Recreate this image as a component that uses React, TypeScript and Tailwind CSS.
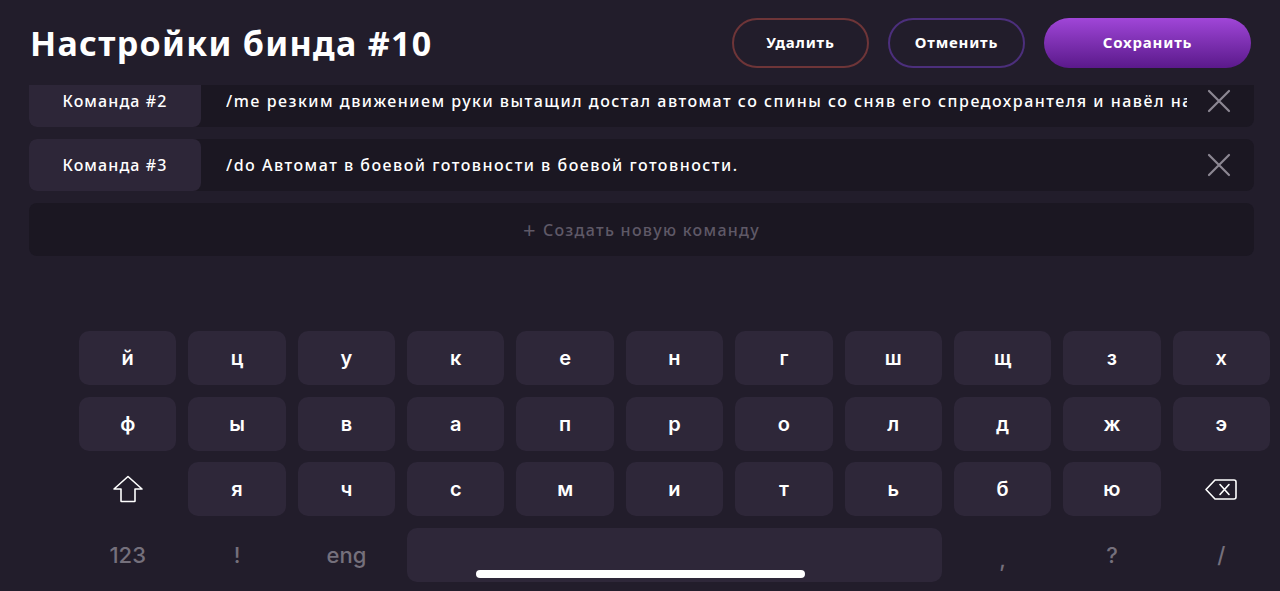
import React from "react";

const row1 = ["й", "ц", "у", "к", "е", "н", "г", "ш", "щ", "з", "х"];
const row2 = ["ф", "ы", "в", "а", "п", "р", "о", "л", "д", "ж", "э"];
const row3 = ["я", "ч", "с", "м", "и", "т", "ь", "б", "ю"];

function Key({ children }: { children: React.ReactNode }) {
  return (
    <div className="h-[54px] rounded-[10px] bg-[#2e2739] flex items-center justify-center text-white text-[20px] font-semibold">
      {children}
    </div>
  );
}

function Plain({ children }: { children: React.ReactNode }) {
  return (
    <div className="h-[54px] flex items-center justify-center text-[#75707c] text-[22px] font-medium">
      {children}
    </div>
  );
}

function XIcon() {
  return (
    <svg width="24" height="24" viewBox="0 0 24 24" fill="none" stroke="#8c8793" strokeWidth="2.2" strokeLinecap="round">
      <path d="M2 2 L22 22 M22 2 L2 22" />
    </svg>
  );
}

function CommandRow({ label, text }: { label: string; text: string }) {
  return (
    <div className="flex h-[52px] rounded-[8px] bg-[#1b1722]">
      <div className="w-[172px] shrink-0 rounded-[8px] bg-[#2d2638] flex items-center justify-center text-white text-[16px] font-medium tracking-[1.1px]">
        {label}
      </div>
      <div className="flex-1 min-w-0 flex items-center pl-[25px] pr-[22px]">
        <div className="flex-1 min-w-0 overflow-hidden whitespace-nowrap text-white text-[16px] font-medium tracking-[1.5px]">
          {text}
        </div>
        <div className="w-[45px] shrink-0 flex justify-end pr-[1px]">
          <XIcon />
        </div>
      </div>
    </div>
  );
}

export default function App() {
  return (
    <div
      className="relative w-[1280px] h-[591px] bg-[#221d2b] flex flex-col overflow-hidden"
      style={{ fontFamily: '"Noto Sans", "Open Sans", sans-serif' }}
    >
      <div className="h-[85px] shrink-0 flex items-center pl-[30px] pr-[29px]">
        <div className="flex-1 text-white text-[34px] font-bold leading-none tracking-[1.3px]">
          Настройки бинда #10
        </div>
        <div className="flex items-center gap-[19px]">
          <button className="w-[137px] h-[50px] rounded-full border-2 border-[#6e3538] text-white text-[15px] font-bold tracking-[0.8px]">
            Удалить
          </button>
          <button className="w-[137px] h-[50px] rounded-full border-2 border-[#4c2f7c] text-white text-[15px] font-bold tracking-[0.8px]">
            Отменить
          </button>
          <button className="w-[207px] h-[50px] rounded-full bg-gradient-to-b from-[#a046d8] to-[#5b198b] text-white text-[15px] font-bold tracking-[0.8px]">
            Сохранить
          </button>
        </div>
      </div>

      <div className="flex-1 overflow-hidden px-[29px] pr-[26px]">
        <div className="-mt-[10px] flex flex-col gap-[12px]">
          <CommandRow
            label="Команда #2"
            text="/me резким движением руки вытащил достал автомат со спины со сняв его спредохрантеля и навёл на цель"
          />
          <CommandRow
            label="Команда #3"
            text="/do Автомат в боевой готовности в боевой готовности."
          />
          <div className="h-[53px] rounded-[8px] bg-[#1b1722] flex items-center justify-center text-[#5f5967] text-[16px] font-medium tracking-[1.3px]">
            <span className="text-[22px] font-normal leading-none mr-[6px] -mt-[2px]">+</span>
            Создать новую команду
          </div>
        </div>
      </div>

      <div
        className="shrink-0 pl-[79px] pr-[10px] pb-[9px] grid grid-cols-11 gap-x-[12px] gap-y-[11.7px]"
        style={{ fontFamily: 'Inter, "Noto Sans", sans-serif' }}
      >
        {row1.map((k) => (
          <Key key={k}>{k}</Key>
        ))}
        {row2.map((k) => (
          <Key key={k}>{k}</Key>
        ))}
        <div className="h-[54px] flex items-center justify-center">
          <svg width="32" height="28" viewBox="0 0 32 28" fill="none" stroke="white" strokeWidth="1.6" strokeLinejoin="round">
            <path d="M16 1.5 L30 14 L23 14 L23 26 Q23 26.5 22.5 26.5 L9.5 26.5 Q9 26.5 9 26 L9 14 L2 14 Z" />
          </svg>
        </div>
        {row3.map((k) => (
          <Key key={k}>{k}</Key>
        ))}
        <div className="h-[54px] flex items-center justify-center">
          <svg width="32" height="21" viewBox="0 0 32 21" fill="none" stroke="white" strokeWidth="1.6" strokeLinejoin="round" strokeLinecap="round">
            <path d="M10 1 L29 1 Q31 1 31 3 L31 18 Q31 20 29 20 L10 20 L1 10.5 Z" />
            <path d="M15 5.5 L24 15.5 M24 5.5 L15 15.5" />
          </svg>
        </div>
        <Plain>123</Plain>
        <Plain>!</Plain>
        <Plain>eng</Plain>
        <div className="col-span-5 h-[54px] rounded-[10px] bg-[#2e2739]" />
        <Plain>
          <span className="mt-[8px]">,</span>
        </Plain>
        <Plain>?</Plain>
        <Plain>/</Plain>
      </div>

      <div className="absolute left-[476px] top-[570px] w-[329px] h-[8px] rounded-full bg-white" />
    </div>
  );
}
